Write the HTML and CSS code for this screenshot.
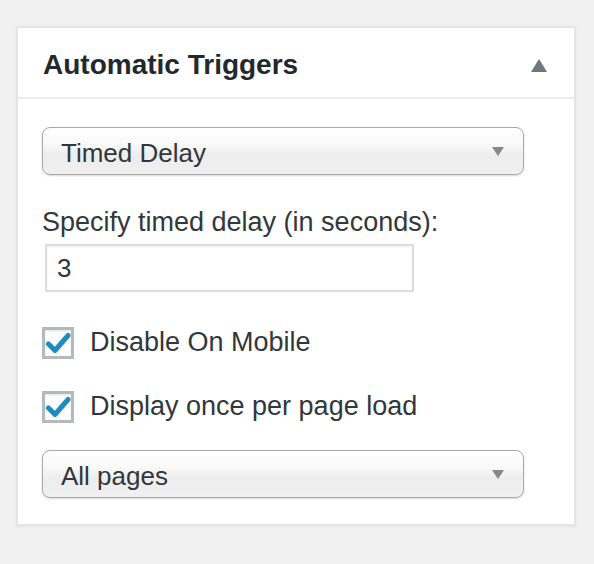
FILE: index.html
```html
<!DOCTYPE html>
<html lang="en">
<head>
    <meta charset="UTF-8">
    <title>Automatic Triggers</title>
    <link rel="stylesheet" href="styles.css">
</head>
<body>
    <div class="postbox">
        <div class="postbox-header">
            <h2>Automatic Triggers</h2>
            <span class="toggle-arrow"></span>
        </div>
        <div class="inside">
            <div class="select-wrap">
                <select class="trigger-select">
                    <option>Timed Delay</option>
                </select>
            </div>

            <label class="field-label" for="delay">Specify timed delay (in seconds):</label>
            <input class="text-input" id="delay" type="text" value="3">

            <label class="check-row first">
                <span class="checkbox">
                    <svg viewBox="0 0 26 26" width="26" height="26"><path d="M3.5 14 L10 20.5 L23 5.5" fill="none" stroke="#1e8cbe" stroke-width="5" stroke-linecap="round" stroke-linejoin="round"/></svg>
                </span>
                <span>Disable On Mobile</span>
            </label>
            <label class="check-row">
                <span class="checkbox">
                    <svg viewBox="0 0 26 26" width="26" height="26"><path d="M3.5 14 L10 20.5 L23 5.5" fill="none" stroke="#1e8cbe" stroke-width="5" stroke-linecap="round" stroke-linejoin="round"/></svg>
                </span>
                <span>Display once per page load</span>
            </label>

            <div class="select-wrap last">
                <select class="trigger-select">
                    <option>All pages</option>
                </select>
            </div>
        </div>
    </div>
</body>
</html>
```

FILE: styles.css
```css
body {
    margin: 0;
    padding: 26px 18px 40px 16px;
    background-color: #f1f1f1;
    font-family: "Liberation Sans", Arial, sans-serif;
    color: #32373c;
}
.postbox {
    background: #fff;
    border: 2px solid #e5e5e5;
    box-shadow: 0 1px 2px rgba(0, 0, 0, 0.05);
}
.postbox-header {
    display: flex;
    align-items: center;
    justify-content: space-between;
    padding: 21px 27px 16px 25px;
    border-bottom: 2px solid #eeeeee;
}
.postbox-header h2 {
    margin: 0;
    font-size: 28px;
    line-height: 32px;
    font-weight: bold;
    color: #23282d;
}
.toggle-arrow {
    width: 0;
    height: 0;
    margin-top: 0;
    border-left: 8px solid transparent;
    border-right: 8px solid transparent;
    border-bottom: 13px solid #72777c;
}
.inside {
    padding: 28px 24px 26px 24px;
}
.select-wrap {
    position: relative;
    width: 482px;
}
.select-wrap::after {
    content: "";
    position: absolute;
    right: 20px;
    top: 20px;
    border-left: 6.5px solid transparent;
    border-right: 6.5px solid transparent;
    border-top: 9px solid #888;
    pointer-events: none;
}
.trigger-select {
    appearance: none;
    -webkit-appearance: none;
    display: block;
    box-sizing: border-box;
    width: 100%;
    height: 48px;
    margin: 0;
    padding: 4px 18px 0 18px;
    font-family: "Liberation Sans", Arial, sans-serif;
    font-size: 26px;
    color: #32373c;
    border: 1.5px solid #a9a9a9;
    border-radius: 8px;
    background: linear-gradient(#ffffff, #f9f9f9 35%, #ededed 60%, #f0f0f0);
    box-shadow: 0 1px 2px rgba(0, 0, 0, 0.15);
}
.field-label {
    display: block;
    margin-top: 32px;
    font-size: 27px;
    line-height: 30px;
}
.text-input {
    display: block;
    box-sizing: border-box;
    width: 369px;
    height: 48px;
    margin: 7px 0 0 3px;
    padding: 0 10px;
    font-family: "Liberation Sans", Arial, sans-serif;
    font-size: 26px;
    color: #32373c;
    border: 2px solid #dddddd;
    box-shadow: inset 0 1px 2px rgba(0, 0, 0, 0.07);
    outline: none;
}
.check-row {
    display: flex;
    align-items: center;
    gap: 16px;
    margin-top: 32px;
    font-size: 27px;
    line-height: 32px;
}
.check-row.first {
    margin-top: 35px;
}
.checkbox {
    box-sizing: border-box;
    width: 32px;
    height: 32px;
    display: flex;
    align-items: center;
    justify-content: center;
    border: 3px solid #b4b9be;
    background: #fdfdfd;
    box-shadow: inset 0 1px 2px rgba(0, 0, 0, 0.1);
}
.check-row > span:last-child {
    margin-top: -2px;
}
.select-wrap.last {
    margin-top: 27px;
}
```
